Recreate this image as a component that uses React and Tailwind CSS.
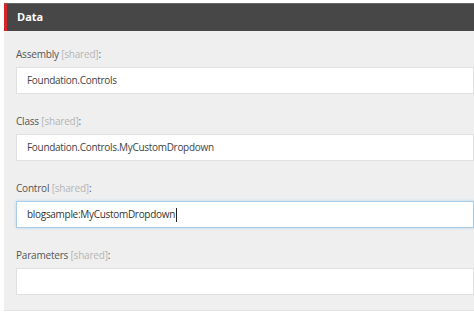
export default function App() {
  const fields = [
    { label: "Assembly", value: "Foundation.Controls" },
    { label: "Class", value: "Foundation.Controls.MyCustomDropdown" },
    { label: "Control", value: "blogsample:MyCustomDropdown", focus: true },
    { label: "Parameters", value: "" },
  ]
  return (
    <div className="w-[474px] h-[313px] bg-white pt-[3px] pl-[4px] overflow-hidden" style={{ fontFamily: '"Open Sans", sans-serif' }}>
      <div className="flex h-[28px] items-center bg-[#474747] border-l-[3px] border-[#d2262b] border-t border-t-[#666]">
        <span className="pl-[10px] text-[11px] font-bold text-white">Data</span>
      </div>
      <div className="h-[280px] bg-[#efefef] border-b border-[#e2e2e2] pl-[12px] pt-[16px]">
        {fields.map(f => (
          <div key={f.label} className="mb-[20px]">
            <div className="h-[20px] text-[10px] text-[#555] leading-[14px] tracking-[-0.2px]">
              {f.label} <span className="text-[#b5b5b5]">[shared]</span>:
            </div>
            <div className={`h-[27px] flex items-center pl-[10px] bg-white text-[10px] tracking-[-0.3px] border ${f.focus ? "text-[#333] border-[#a9cce8] shadow-[0_0_3px_#b9d7ee]" : "text-[#444] border-[#e0e0e0]"}`}>
              {f.value}
              {f.focus && <span className="ml-px w-px h-[14px] bg-[#222]"></span>}
            </div>
          </div>
        ))}
      </div>
    </div>
  )
}
